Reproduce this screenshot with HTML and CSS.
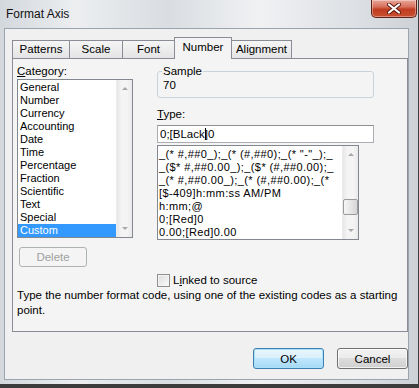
FILE: index.html
```html
<!DOCTYPE html>
<html lang="en">
<head>
    <meta charset="UTF-8">
    <title>Format Axis</title>
    <link rel="stylesheet" href="styles.css">
</head>
<body>
    <div class="window">
        <div class="titlebar">
            <span class="title">Format Axis</span>
            <div class="close">
                <svg width="14" height="11" viewBox="0 0 14 11">
                    <path d="M2 1.5 L12 9.5 M12 1.5 L2 9.5" stroke="#5a1a10" stroke-width="4" stroke-linecap="round"/>
                    <path d="M2 1.5 L12 9.5 M12 1.5 L2 9.5" stroke="#ffffff" stroke-width="2.2" stroke-linecap="round"/>
                </svg>
            </div>
        </div>

        <div class="client">
            <div class="tabs">
                <div class="tab" style="width:58px">Patterns</div>
                <div class="tab" style="width:54px">Scale</div>
                <div class="tab" style="width:53px">Font</div>
                <div class="tab active" style="width:58px">Number</div>
                <div class="tab" style="width:61px">Alignment</div>
            </div>

            <div class="panel">
                <div class="cols">
                    <div class="col-left">
                        <p class="label"><u>C</u>ategory:</p>
                        <div class="listbox cat-list">
                            <ul class="items">
                                <li>General</li>
                                <li>Number</li>
                                <li>Currency</li>
                                <li>Accounting</li>
                                <li>Date</li>
                                <li>Time</li>
                                <li>Percentage</li>
                                <li>Fraction</li>
                                <li>Scientific</li>
                                <li>Text</li>
                                <li>Special</li>
                                <li class="selected">Custom</li>
                            </ul>
                            <div class="scrollbar">
                                <span class="arrow up"></span>
                                <span class="arrow down"></span>
                            </div>
                        </div>
                        <button class="btn disabled">Delete</button>
                    </div>

                    <div class="col-right">
                        <fieldset class="sample">
                            <legend>Sample</legend>
                            <p>70</p>
                        </fieldset>
                        <p class="label type-label"><u>T</u>ype:</p>
                        <div class="textbox">0;[BLack<span class="caret"></span>]0</div>
                        <div class="listbox fmt-list">
                            <ul class="items">
                                <li>_(* #,##0_);_(* (#,##0);_(* "-"_);_</li>
                                <li>_($* #,##0.00_);_($* (#,##0.00);_</li>
                                <li>_(* #,##0.00_);_(* (#,##0.00);_(*</li>
                                <li>[$-409]h:mm:ss AM/PM</li>
                                <li>h:mm;@</li>
                                <li>0;[Red]0</li>
                                <li>0.00;[Red]0.00</li>
                            </ul>
                            <div class="scrollbar">
                                <span class="arrow up"></span>
                                <span class="thumb"></span>
                                <span class="arrow down"></span>
                            </div>
                        </div>
                        <label class="check">
                            <span class="box"></span>
                            <span>L<u>i</u>nked to source</span>
                        </label>
                    </div>
                </div>
                <p class="hint">Type the number format code, using one of the existing codes as a starting point.</p>
            </div>

            <div class="buttons">
                <button class="btn default">OK</button>
                <button class="btn">Cancel</button>
            </div>
        </div>
    </div>
</body>
</html>
```

FILE: styles.css
```css
*{
    margin: 0;
    padding: 0;
    box-sizing: border-box;
}
body{
    width: 419px;
    height: 388px;
    overflow: hidden;
    background: #3c3c3c;
    font-family: "Liberation Sans", Arial, sans-serif;
    font-size: 11.5px;
    color: #000;
}

/* window frame */
.window{
    width: 418px;
    height: 384px;
    display: flex;
    flex-direction: column;
    background: linear-gradient(90deg, #d3d8dd 0%, #eceef0 18%, #d9dde1 40%, #f0f1f3 62%, #dde0e4 85%, #cdd1d6 100%);
}
.titlebar{
    height: 28px;
    display: flex;
    justify-content: space-between;
    align-items: flex-start;
    padding-left: 6px;
}
.title{
    font-size: 12px;
    line-height: 15px;
    margin-top: 7px;
    color: #111;
}
.close{
    width: 46px;
    height: 18px;
    margin-right: 1px;
    display: flex;
    align-items: center;
    justify-content: center;
    border: 1px solid #5e2217;
    border-top: none;
    border-radius: 0 0 5px 5px;
    background: linear-gradient(#e9a79a 0%, #d7705b 40%, #c03c22 55%, #c9502f 100%);
    box-shadow: inset 0 0 0 1px rgba(255,255,255,0.35);
}

/* client area */
.client{
    width: 405px;
    height: 352px;
    margin-left: 4px;
    border: 1px solid #9ba3ad;
    background: #f0f0f0;
    padding: 8px 0 0 7px;
}
.tabs{
    display: flex;
    align-items: flex-end;
    height: 21px;
    position: relative;
    z-index: 1;
}
.tab{
    height: 18px;
    border: 1px solid #898c95;
    border-bottom: none;
    background: linear-gradient(#f5f5f5, #e4e4e4);
    text-align: center;
    line-height: 17px;
    margin-right: -1px;
}
.tab.active{
    height: 22px;
    margin-bottom: -1px;
    background: #f4f4f4;
    line-height: 19px;
}
.panel{
    width: 396px;
    height: 274px;
    border: 1px solid #898c95;
    background: #f4f4f4;
    padding: 6px 4px 0 4px;
}
.cols{
    display: grid;
    grid-template-columns: 116px 217px;
    column-gap: 24px;
}
.label{
    line-height: 13px;
    height: 13px;
}
u{
    text-decoration: underline;
    text-underline-offset: 1px;
}

/* list boxes */
.listbox{
    display: flex;
    background: #fff;
    border: 1px solid #828790;
    overflow: hidden;
}
.items{
    list-style: none;
    flex: 1;
    overflow: hidden;
    white-space: nowrap;
}
.items li{
    height: 13px;
    line-height: 13px;
    font-size: 11px;
    padding-left: 2px;
}
.items li.selected{
    background: #3399ff;
    color: #fff;
}
.cat-list{
    margin-top: 1px;
    height: 159px;
}
.cat-list .items{
    padding-top: 1px;
}
.fmt-list{
    margin-top: 2px;
    width: 202px;
    height: 95px;
}
.fmt-list .items{
    padding-top: 2px;
}
.fmt-list .items li{
    padding-left: 1px;
    letter-spacing: 0.4px;
}
.scrollbar{
    width: 16px;
    display: flex;
    flex-direction: column;
    align-items: center;
    background: linear-gradient(90deg, #e7e7e7, #f4f4f4 30%, #f4f4f4 70%, #e9e9e9);
    border-left: 1px solid #ececec;
}
.arrow{
    width: 0;
    height: 0;
    border-left: 3px solid transparent;
    border-right: 3px solid transparent;
}
.arrow.up{
    border-bottom: 3px solid #a8a8a8;
    margin-top: 7px;
}
.arrow.down{
    border-top: 3px solid #a8a8a8;
    margin-top: auto;
    margin-bottom: 7px;
}
.thumb{
    width: 15px;
    height: 16px;
    margin-top: 43px;
    border: 1px solid #9b9b9b;
    border-radius: 2px;
    background: linear-gradient(90deg, #f6f6f6, #e6e6e6 50%, #d6d6d6);
}

/* buttons */
.btn{
    font-family: inherit;
    font-size: inherit;
    width: 71px;
    height: 21px;
    border: 1px solid #707070;
    border-radius: 3px;
    background: linear-gradient(#f2f2f2 0%, #ebebeb 49%, #dddddd 50%, #cfcfcf 100%);
    box-shadow: inset 0 0 0 1px rgba(255,255,255,0.7);
    color: #000;
}
.btn.disabled{
    width: 68px;
    height: 20px;
    margin: 9px 0 0 2px;
    border-color: #adb2b5;
    background: #f4f4f4;
    color: #a0a0a0;
    box-shadow: none;
}
.btn.default{
    border-color: #3c7fb1;
    box-shadow: inset 0 0 0 1px #a9e1fb;
    background: linear-gradient(#eaf6fd 0%, #d9f0fc 49%, #bee6fd 50%, #a7d9f5 100%);
}
.buttons{
    display: flex;
    justify-content: flex-end;
    gap: 13px;
    width: 396px;
    margin-top: 16px;
}

/* right column */
.sample{
    border: 1px solid #c9d3da;
    border-radius: 3px;
    padding: 1px 4px 4px 4px;
    height: 33px;
}
.sample legend{
    padding: 0 1px;
    line-height: 13px;
}
.sample p{
    line-height: 13px;
    padding-left: 1px;
}
.type-label{
    margin-top: 10px;
}
.textbox{
    margin-top: 4px;
    height: 18px;
    border: 1px solid #abadb3;
    border-top-color: #8e8f8f;
    background: #fff;
    line-height: 16px;
    padding-left: 2px;
}
.caret{
    display: inline-block;
    width: 1px;
    height: 12px;
    background: #000;
    vertical-align: -2px;
    margin-right: -1px;
}
.check{
    display: flex;
    align-items: center;
    gap: 3px;
    margin-top: 34px;
    line-height: 13px;
}
.check .box{
    width: 13px;
    height: 13px;
    border: 1px solid #8e8f8f;
    background: linear-gradient(135deg, #dcdcdc, #fbfbfb);
    box-shadow: inset 0 0 0 1px #f4f4f4;
}
.hint{
    margin-top: 1px;
    line-height: 15px;
}
```
